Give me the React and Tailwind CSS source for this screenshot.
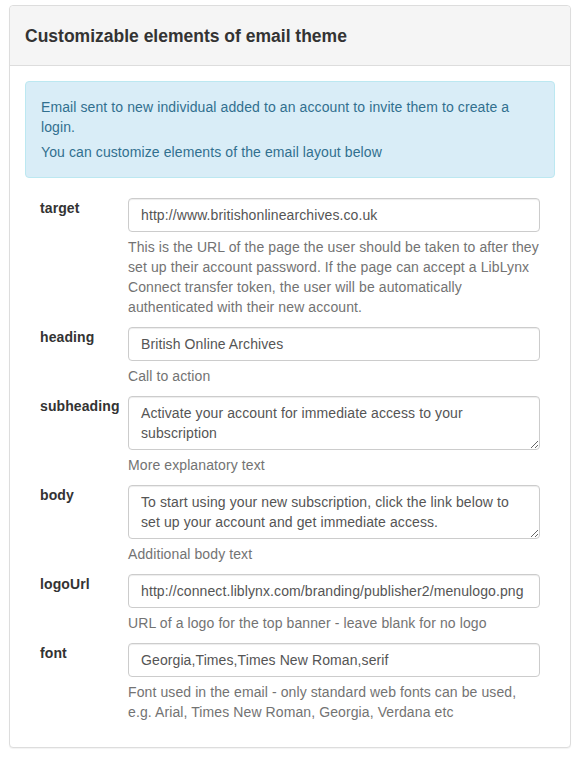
const fields = [
  {
    name: 'target',
    value: 'http://www.britishonlinearchives.co.uk',
    help: 'This is the URL of the page the user should be taken to after they set up their account password. If the page can accept a LibLynx Connect transfer token, the user will be automatically authenticated with their new account.',
  },
  { name: 'heading', value: 'British Online Archives', help: 'Call to action' },
  {
    name: 'subheading',
    value: 'Activate your account for immediate access to your subscription',
    help: 'More explanatory text',
    multi: true,
  },
  {
    name: 'body',
    value: 'To start using your new subscription, click the link below to set up your account and get immediate access.',
    help: 'Additional body text',
    multi: true,
  },
  {
    name: 'logoUrl',
    value: 'http://connect.liblynx.com/branding/publisher2/menulogo.png',
    help: 'URL of a logo for the top banner - leave blank for no logo',
  },
  {
    name: 'font',
    value: 'Georgia,Times,Times New Roman,serif',
    help: 'Font used in the email - only standard web fonts can be used, e.g. Arial, Times New Roman, Georgia, Verdana etc',
  },
]

const inputCls =
  'block w-full rounded-[4px] border border-[#ccc] bg-white px-3 py-[6px] text-[14px] leading-[20px] tracking-[0.1px] text-[#555] shadow-[inset_0_1px_1px_rgba(0,0,0,0.075)] outline-none'

function App() {
  return (
    <div className="min-h-[763px] bg-white pt-[5px] px-[9px] font-['Liberation_Sans',Arial,sans-serif] text-[14px] leading-[20px] tracking-[0.1px] text-[#333]">
      <div className="rounded-[4px] border border-[#ddd] bg-white shadow-[0_1px_1px_rgba(0,0,0,0.05)]">
        <div className="rounded-t-[4px] border-b border-[#ddd] bg-[#f5f5f5] px-[15px] pt-[20px] pb-[19px]">
          <h3 className="text-[17.5px] leading-[20px] font-semibold tracking-normal text-[#333]">
            Customizable elements of email theme
          </h3>
        </div>

        <div className="px-[15px] pt-[15px] pb-[25px]">
          <div className="mb-[20px] rounded-[4px] border border-[#bce8f1] bg-[#d9edf7] p-[15px] text-[#31708f]">
            <p className="mb-[5px]">
              Email sent to new individual added to an account to invite them to create a login.
            </p>
            <p>You can customize elements of the email layout below</p>
          </div>

          <div className="flex flex-col gap-[10px]">
            {fields.map((f) => (
              <div key={f.name} className="flex">
                <label className="w-[88px] shrink-0 px-[15px] font-bold whitespace-nowrap">
                  {f.name}
                </label>
                <div className="min-w-0 flex-1 px-[15px]">
                  {f.multi ? (
                    <textarea
                      rows={2}
                      defaultValue={f.value}
                      className={inputCls + ' resize-y'}
                    />
                  ) : (
                    <input type="text" defaultValue={f.value} className={inputCls + ' h-[34px]'} />
                  )}
                  <p className="mt-[5px] text-[#737373]">{f.help}</p>
                </div>
              </div>
            ))}
          </div>
        </div>
      </div>
    </div>
  )
}

export default App
